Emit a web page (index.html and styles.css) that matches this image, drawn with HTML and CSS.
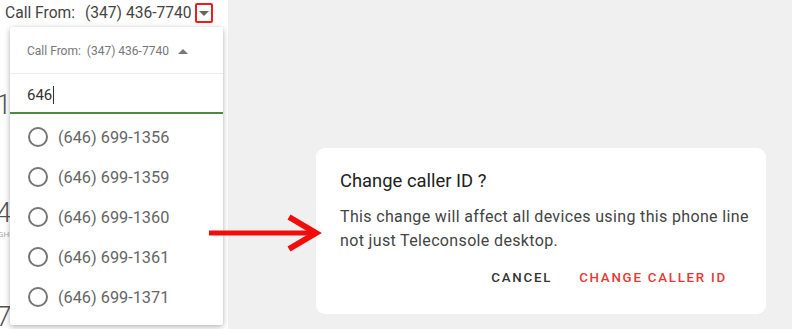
FILE: index.html
```html
<!DOCTYPE html>
<html>
<head>
<meta charset="utf-8">
<link rel="stylesheet" href="styles.css">
</head>
<body>
<div class="screen">
  <div class="app">
    <div class="callfrom">
      <span class="cf-label">Call From:</span>
      <span class="cf-num">(347) 436-7740</span>
      <span class="caret-box"><span class="caret-down"></span></span>
    </div>
    <div class="dialpad">
      <div class="key k1">1</div>
      <div class="key k4">4<span class="sub">GHI</span></div>
      <div class="key k7">7</div>
    </div>
    <div class="menu">
      <div class="menu-head">
        <span>Call From:</span><span class="mh-num">(347) 436-7740</span><span class="caret-up"></span>
      </div>
      <div class="search"><span class="typed">646</span><span class="cursor"></span></div>
      <ul class="options">
        <li><span class="radio"></span>(646) 699-1356</li>
        <li><span class="radio"></span>(646) 699-1359</li>
        <li><span class="radio"></span>(646) 699-1360</li>
        <li><span class="radio"></span>(646) 699-1361</li>
        <li><span class="radio"></span>(646) 699-1371</li>
      </ul>
    </div>
  </div>
  <div class="backdrop">
    <div class="dialog">
      <h2 class="dlg-title">Change caller ID ?</h2>
      <p class="dlg-body">This change will affect all devices using this phone line not just Teleconsole desktop.</p>
      <div class="dlg-actions">
        <span class="btn btn-cancel">CANCEL</span>
        <span class="btn btn-ok">CHANGE CALLER ID</span>
      </div>
    </div>
  </div>
  <svg class="arrow" width="116" height="40" viewBox="0 0 116 40">
    <line x1="2" y1="20" x2="108" y2="20" stroke="#f20d0d" stroke-width="5"/>
    <polyline points="82,4 109,20 82,36" fill="none" stroke="#f20d0d" stroke-width="6" stroke-linejoin="miter"/>
  </svg>
</div>
</body>
</html>
```
FILE: styles.css
```css
* { box-sizing: border-box; }
html, body { margin: 0; padding: 0; }
body {
  width: 792px;
  height: 329px;
  overflow: hidden;
  font-family: Roboto, "Liberation Sans", sans-serif;
  background: #f0f0f0;
}
.screen {
  position: relative;
  display: flex;
  width: 792px;
  height: 329px;
}
.app {
  position: relative;
  width: 228px;
  flex: none;
  background: #fff;
}
.callfrom {
  display: flex;
  align-items: center;
  height: 26px;
  padding-left: 5px;
  font-size: 15.6px;
  color: #444;
}
.cf-num { margin-left: 10px; }
.caret-box {
  display: inline-flex;
  align-items: center;
  justify-content: center;
  width: 18px;
  height: 20px;
  margin-left: 3px;
  border: 2px solid #f01c1c;
  border-radius: 2px;
}
.caret-down {
  width: 0; height: 0;
  border-left: 5px solid transparent;
  border-right: 5px solid transparent;
  border-top: 5px solid #666;
}
.dialpad {
  color: #555;
  font-weight: 300;
  font-size: 28px;
}
.key { position: absolute; left: -4px; }
.k1 { top: 88px; }
.k4 { top: 196px; }
.k7 { top: 300px; }
.sub {
  position: absolute;
  left: 2px;
  top: 34px;
  font-size: 8px;
  color: #aaa;
  font-weight: 400;
}
.menu {
  position: absolute;
  left: 10px;
  top: 27px;
  width: 213px;
  height: 298px;
  background: #fff;
  box-shadow: 0 2px 6px rgba(0,0,0,0.28), 0 0 2px rgba(0,0,0,0.08);
  border-radius: 2px;
}
.menu-head {
  display: flex;
  align-items: center;
  height: 47px;
  padding-left: 17px;
  padding-top: 2px;
  font-size: 12px;
  color: #777;
  border-bottom: 1px solid #ececec;
}
.mh-num { margin-left: 6px; }
.caret-up {
  margin-left: 9px;
  width: 0; height: 0;
  border-left: 5px solid transparent;
  border-right: 5px solid transparent;
  border-bottom: 5px solid #777;
}
.search {
  display: flex;
  align-items: center;
  height: 40px;
  padding-left: 17px;
  padding-top: 4px;
  font-size: 15px;
  color: #333;
  border-bottom: 2px solid #4b8a40;
}
.cursor {
  display: inline-block;
  width: 1px;
  height: 18px;
  margin-left: 1px;
  background: #333;
}
.options {
  list-style: none;
  margin: 0;
  padding: 3px 0 0;
}
.options li {
  display: flex;
  align-items: center;
  height: 40px;
  padding-left: 18px;
  font-size: 16.3px;
  color: #666;
}
.radio {
  width: 20px;
  height: 20px;
  border: 2px solid #767676;
  border-radius: 50%;
  margin-right: 10px;
}
.backdrop {
  flex: 1;
  display: flex;
  align-items: flex-start;
  justify-content: flex-end;
  padding: 148px 26px 0 0;
}
.dialog {
  width: 450px;
  height: 166px;
  background: #fff;
  border-radius: 9px;
  padding: 22px 24px 0;
}
.dlg-title {
  margin: 0;
  font-size: 18.4px;
  font-weight: 400;
  color: #222;
  line-height: 22px;
}
.dlg-body {
  margin: 13px 0 0;
  font-size: 16px;
  letter-spacing: 0.35px;
  line-height: 24px;
  color: #444;
  width: 420px;
}
.dlg-actions {
  display: flex;
  justify-content: flex-end;
  gap: 27px;
  margin-top: 17px;
  padding-right: 15px;
}
.btn {
  font-size: 13.3px;
  font-weight: 500;
  letter-spacing: 1.75px;
}
.btn-cancel { color: #333; }
.btn-ok { color: #e53935; }
.arrow {
  position: absolute;
  left: 207px;
  top: 213px;
}
```
